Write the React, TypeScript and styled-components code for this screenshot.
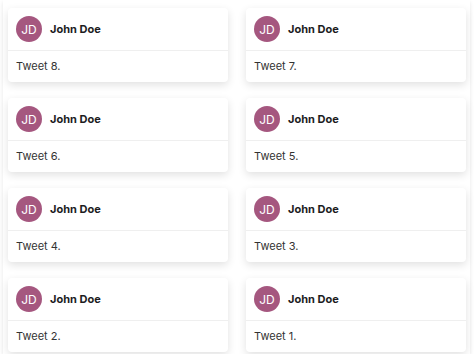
import React from 'react';
import styled, { createGlobalStyle } from 'styled-components';

const GlobalStyle = createGlobalStyle`
  body {
    margin: 0;
    background: #ffffff;
    font-family: Inter, 'Noto Sans', sans-serif;
  }
`;

const tweets = [8, 7, 6, 5, 4, 3, 2, 1].map((n) => ({
  id: n,
  author: 'John Doe',
  initials: 'JD',
  text: `Tweet ${n}.`,
}));

const App = () => {
  return (
    <>
      <GlobalStyle />
      <Feed>
        <Grid>
          {tweets.map((tweet) => (
            <Card key={tweet.id}>
              <CardHeader>
                <Avatar>{tweet.initials}</Avatar>
                <Author>{tweet.author}</Author>
              </CardHeader>
              <CardBody>{tweet.text}</CardBody>
            </Card>
          ))}
        </Grid>
      </Feed>
    </>
  );
};

const Feed = styled.div`
  margin: 0 4px 0 3px;
  padding: 8px 4px 2px 5px;
  box-shadow: 0 2px 4px rgba(0, 0, 0, 0.1);
`;

const Grid = styled.div`
  display: grid;
  grid-template-columns: 1fr 1fr;
  column-gap: 18px;
  row-gap: 16px;
`;

const Card = styled.div`
  background: #ffffff;
  border-radius: 4px;
  box-shadow: 0 3px 8px rgba(0, 0, 0, 0.12);
  overflow: hidden;
`;

const CardHeader = styled.div`
  display: flex;
  align-items: center;
  gap: 8px;
  padding: 8px;
  border-bottom: 1px solid #efefef;
`;

const Avatar = styled.div`
  width: 26px;
  height: 26px;
  border-radius: 50%;
  background: #a5577f;
  color: #ffffff;
  display: flex;
  align-items: center;
  justify-content: center;
  font-size: 12px;
`;

const Author = styled.span`
  font-size: 11px;
  font-weight: 700;
  color: #1c1c1e;
`;

const CardBody = styled.div`
  padding: 8px;
  font-size: 11px;
  line-height: 15px;
  color: #333333;
`;

export default App;
